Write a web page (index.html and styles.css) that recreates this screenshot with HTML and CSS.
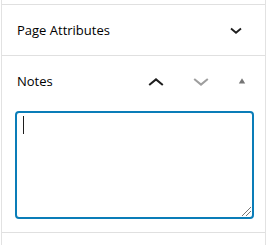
FILE: index.html
```html
<!DOCTYPE html>
<html>
<head>
<meta charset="utf-8">
<link rel="stylesheet" href="styles.css">
</head>
<body>
<div class="sidebar">
  <div class="panel">
    <div class="panel-header">
      <span class="title">Page Attributes</span>
      <svg class="chev" width="12" height="8" viewBox="0 0 12 8"><polyline points="1,1.5 6,5.8 11,1.5" fill="none" stroke="#1e1e1e" stroke-width="1.8"/></svg>
    </div>
  </div>
  <div class="panel">
    <div class="panel-header">
      <span class="title">Notes</span>
      <div class="actions">
        <svg class="btn" width="16" height="8" viewBox="0 0 16 8"><polyline points="1.2,7 8,1.4 14.8,7" fill="none" stroke="#1e1e1e" stroke-width="2"/></svg>
        <svg class="btn" width="16" height="8" viewBox="0 0 16 8"><polyline points="1.2,1 8,6.6 14.8,1" fill="none" stroke="#9e9e9e" stroke-width="2"/></svg>
        <svg class="btn tri" width="8" height="7" viewBox="0 0 8 7"><path d="M0.8 6.5L4 1.2 7.2 6.5z" fill="#757575"/></svg>
      </div>
    </div>
    <div class="panel-body">
      <div class="textarea"><span class="caret"></span><span class="grip"></span></div>
    </div>
  </div>
  <div class="panel"></div>
</div>
</body>
</html>
```
FILE: styles.css
```css
html, body {
  margin: 0;
  padding: 0;
  background: #fff;
}
body {
  font-family: "Open Sans", "Noto Sans", sans-serif;
  color: #1e1e1e;
}
.sidebar {
  width: 265px;
  height: 245px;
  margin-left: 1px;
  padding-top: 4px;
  box-sizing: border-box;
  border-left: 1px solid #e2e2e2;
  border-right: 1px solid #e2e2e2;
}
.panel {
  border-top: 1px solid #e0e0e0;
}
.panel-header {
  height: 50px;
  display: flex;
  align-items: center;
  justify-content: space-between;
  padding: 0 23px 0 15px;
}
.title {
  font-size: 13px;
  font-weight: 500;
  color: #000;
}
.chev {
  display: block;
  margin-top: 1px;
}
.actions {
  display: flex;
  align-items: center;
  gap: 29px;
  margin-right: -4px;
  margin-top: 2px;
}
.btn {
  display: block;
}
.tri {
  margin-top: -4px;
}
.panel-body {
  padding: 5px 11px 13px 13px;
}
.textarea {
  position: relative;
  height: 108px;
  border: 2px solid #0a7db8;
  border-radius: 4px;
  box-sizing: border-box;
}
.caret {
  position: absolute;
  left: 6px;
  top: 3px;
  width: 1px;
  height: 18px;
  background: #1e1e1e;
}
.grip {
  position: absolute;
  right: 1px;
  bottom: 1px;
  width: 9px;
  height: 9px;
  background: linear-gradient(135deg, transparent 45%, #777 45%, #777 52%, transparent 52%, transparent 70%, #777 70%, #777 77%, transparent 77%);
}
```
